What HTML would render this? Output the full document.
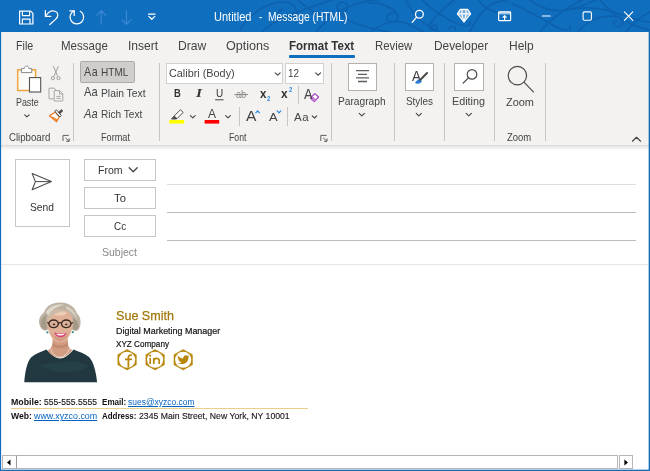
<!DOCTYPE html>
<html lang="en">
<head>
<meta charset="utf-8">
<title>Untitled - Message (HTML)</title>
<style>
html,body{margin:0;padding:0;}
body{width:650px;height:471px;overflow:hidden;background:#fff;font-family:"Liberation Sans",sans-serif;position:relative;}
#win{position:absolute;left:0;top:0;width:650px;height:471px;background:#fff;overflow:hidden;}
.abs{position:absolute;}
.t{position:absolute;white-space:pre;transform-origin:0 50%;font-family:"Liberation Sans",sans-serif;}
#titlebar{position:absolute;left:0;top:0;width:650px;height:32px;background:#106ebe;}
#tabs{position:absolute;left:1px;top:32px;width:648px;height:28px;background:#f3f2f1;}
#ribbon{position:absolute;left:1px;top:60px;width:648px;height:85px;background:#f3f2f1;}
#ribshadow{position:absolute;left:1px;top:145px;width:648px;height:6px;background:linear-gradient(#d8d6d4,#e6e5e4 20%,#eeeeed 40%,#f5f5f5 60%,#fbfbfb 80%,#ffffff);}
#bl{position:absolute;left:0;top:32px;width:1px;height:439px;background:#106ebe;box-shadow:1px 0 0 rgba(16,110,190,0.12);}
#br{position:absolute;left:649px;top:32px;width:1px;height:439px;background:#106ebe;box-shadow:-1px 0 0 rgba(16,110,190,0.35);}
#bb{position:absolute;left:0;top:470px;width:650px;height:1px;background:#106ebe;box-shadow:0 -1px 0 rgba(16,110,190,0.35);}
.sep{position:absolute;width:1px;background:#c8c6c4;}
.box{position:absolute;background:#fff;border:1px solid #c6c6c6;box-sizing:border-box;}
.ibox{position:absolute;background:#fff;border:1px solid #b3b0ad;box-sizing:border-box;}
.combo{position:absolute;background:#fff;border:1px solid #d2d0ce;box-sizing:border-box;}
.line{position:absolute;height:1px;}
svg{position:absolute;left:0;top:0;overflow:visible;}
</style>
</head>
<body>
<div id="win">
  <div id="titlebar"></div>
  <div id="tabs"></div>
  <div id="ribbon"></div>
  <div id="ribshadow"></div>

  <!-- tab underline -->
  <div class="abs" style="left:289px;top:55px;width:66px;height:3px;background:#106ebe;border-radius:1px;"></div>

  <!-- ribbon group separators -->
  <div class="sep" style="left:72.5px;top:63px;height:78px;"></div>
  <div class="sep" style="left:158.5px;top:63px;height:78px;"></div>
  <div class="sep" style="left:330.5px;top:63px;height:78px;"></div>
  <div class="sep" style="left:394.3px;top:63px;height:78px;"></div>
  <div class="sep" style="left:443.8px;top:63px;height:78px;"></div>
  <div class="sep" style="left:493.8px;top:63px;height:78px;"></div>
  <div class="sep" style="left:545.3px;top:63px;height:78px;"></div>
  <!-- small separators in font group -->
  <div class="sep" style="left:297.7px;top:86px;height:18px;"></div>
  <div class="sep" style="left:238.7px;top:107px;height:19px;"></div>
  <div class="sep" style="left:287px;top:107px;height:19px;"></div>

  <!-- HTML selected button -->
  <div class="abs" style="left:80px;top:61px;width:55px;height:22px;background:#d0cecc;border:1px solid #adaba9;border-radius:1.5px;box-sizing:border-box;"></div>

  <!-- combos -->
  <div class="combo" style="left:166px;top:63px;width:117px;height:21px;"></div>
  <div class="combo" style="left:285px;top:63px;width:39px;height:21px;"></div>

  <!-- icon boxes -->
  <div class="ibox" style="left:347.8px;top:63px;width:29.4px;height:27.6px;"></div>
  <div class="ibox" style="left:404.8px;top:63px;width:29px;height:27.6px;"></div>
  <div class="ibox" style="left:454.2px;top:63px;width:29.5px;height:27.6px;"></div>

  <!-- header boxes -->
  <div class="box" style="left:15px;top:158.5px;width:54.5px;height:68.6px;"></div>
  <div class="box" style="left:83.7px;top:158.5px;width:72.4px;height:22px;"></div>
  <div class="box" style="left:83.7px;top:187px;width:72.4px;height:21.6px;"></div>
  <div class="box" style="left:83.7px;top:215px;width:72.4px;height:21.8px;"></div>
  <div class="line" style="left:166.5px;top:184px;width:469px;background:#dedede;"></div>
  <div class="line" style="left:166.5px;top:212px;width:469px;background:#bdbdbd;"></div>
  <div class="line" style="left:166.5px;top:240px;width:469px;background:#bdbdbd;"></div>
  <div class="line" style="left:1px;top:264px;width:647px;background:#e6e6e6;"></div>

  <!-- signature gold line -->
  <div class="line" style="left:10.5px;top:408px;width:297px;background:#e9cf8b;"></div>

  <!-- scrollbar -->
  <div class="abs" style="left:2px;top:455px;width:15px;height:14px;background:#fff;border:1px solid #b6b6b6;box-sizing:border-box;"></div>
  <div class="abs" style="left:16px;top:455px;width:602px;height:14px;background:#fff;border:1px solid #b6b6b6;border-left-color:#9a9a9a;box-sizing:border-box;"></div>
  <div class="abs" style="left:619px;top:455px;width:14px;height:14px;background:#fff;border:1px solid #b6b6b6;box-sizing:border-box;"></div>

  <div id="bl"></div><div id="br"></div><div id="bb"></div>

  <svg width="650" height="471" viewBox="0 0 650 471">
    <!-- title bar pattern -->
<clipPath id="tbclip"><rect x="0" y="0" width="650" height="32"/></clipPath>
<g clip-path="url(#tbclip)" fill="none" stroke="#0c5ca6" stroke-width="1.7" opacity="0.7" stroke-linecap="round">
  <path d="M240 30 C250 14 266 2 284 2 C298 3 300 16 290 20 C280 23 274 14 282 9"/>
  <path d="M262 32 C274 20 292 14 308 8 C320 4 328 1 332 0"/>
  <path d="M298 0 C308 10 322 18 338 15 C350 12 350 2 342 2 C334 3 336 14 350 21 C364 28 378 30 390 32"/>
  <path d="M316 32 C326 20 338 10 356 4 C366 1 372 0 378 0"/>
  <path d="M368 3 C378 2 392 6 397 14 C400 20 394 24 389 21 C384 18 388 12 394 13"/>
  <path d="M372 32 C380 24 390 20 402 22 C412 24 418 30 424 32"/>
  <path d="M422 0 C430 8 444 18 458 24 C466 27 472 26 470 22"/>
  <path d="M428 26 C434 18 444 8 454 0"/>
  <path d="M430 28 C432 24 438 24 437 28 C436 31 430 31 430 28 Z"/>
  <path d="M449 29 C451 25 457 26 455 30"/>
  <path d="M406 0 C410 10 420 24 440 32"/>
  <path d="M470 32 C474 22 482 10 492 4 C498 1 504 0 508 2"/>
  <path d="M478 0 C484 8 494 14 506 12"/>
  <path d="M512 4 C524 8 540 18 558 28 C566 31 572 30 570 26"/>
  <path d="M540 32 C548 22 562 10 582 0"/>
  <path d="M530 0 C540 8 552 12 566 10 C580 8 590 2 596 0"/>
  <path d="M568 10 C584 6 604 8 620 14 C632 18 640 22 650 22"/>
  <path d="M578 32 C586 22 598 16 612 16 C624 17 626 26 618 27 C612 27 612 21 617 21"/>
  <path d="M600 0 C608 10 622 24 650 30"/>
  <path d="M626 32 C632 24 642 16 650 12"/>
</g>

<!-- title: save -->
<g fill="none" stroke="#fff" stroke-width="1.2" stroke-linejoin="round">
  <path d="M19.6 11.1 H30.6 L32.9 13.4 V24 H19.6 Z"/>
  <path d="M22.4 11.1 V15.6 H29.6 V11.1"/>
  <path d="M22.4 24 V19.2 H30 V24"/>
</g>
<!-- undo -->
<g fill="none" stroke="#fff" stroke-width="1.25" stroke-linecap="round" stroke-linejoin="round">
  <path d="M45.4 10.6 V16.4 H50.8"/>
  <path d="M45.6 16.2 C47.5 13 50 10.8 53 10.8 C56 10.8 57.8 13 57.8 15.2 C57.8 17 57 18 55.5 19.4 L49.8 24.5"/>
  <!-- redo -->
  <path d="M69.8 10.9 H74.2 V15.4"/>
  <path d="M80.3 11.3 A6.8 6.8 0 1 1 74.2 10.9"/>
</g>
<!-- up / down (disabled) -->
<g fill="none" stroke="#3b88d3" stroke-width="1.2" stroke-linecap="round" stroke-linejoin="round">
  <path d="M101.2 24.3 V10.8 M96.8 15.2 L101.2 10.8 L105.7 15.2"/>
  <path d="M126.5 10.7 V24.2 M122 19.8 L126.5 24.2 L131 19.8"/>
</g>
<!-- customize QAT -->
<g fill="none" stroke="#fff" stroke-width="1.2" stroke-linecap="round" stroke-linejoin="round">
  <path d="M148.6 14.2 H155"/>
  <path d="M148.8 16.4 L151.8 19.3 L154.8 16.4"/>
</g>
<!-- title search -->
<g fill="none" stroke="#fff" stroke-width="1.3" stroke-linecap="round">
  <circle cx="419.4" cy="14.2" r="3.9"/>
  <path d="M416.6 17.1 L412.2 22.3"/>
</g>
<!-- diamond -->
<g fill="none" stroke="#fff" stroke-width="1.2" stroke-linejoin="round">
  <path d="M460.3 9.4 H467.7 L470.6 13.8 L464 21.8 L457.4 13.8 Z" fill="rgba(255,255,255,0.45)"/>
  <path d="M457.4 13.8 H470.6 M462.2 9.4 L461.6 13.8 L464 21.8 L466.4 13.8 L465.8 9.4"/>
</g>
<!-- ribbon display options -->
<g fill="none" stroke="#fff" stroke-width="1.2" stroke-linejoin="round">
  <rect x="498.6" y="11.8" width="12" height="8.8" rx="0.8"/>
  <rect x="498.6" y="11.8" width="12" height="2.6" fill="rgba(255,255,255,0.6)" stroke="none"/>
  <path d="M504.6 20 V15.8 M502.7 17.6 L504.6 15.7 L506.5 17.6"/>
</g>
<!-- window controls -->
<g fill="none" stroke="#fff" stroke-width="1.1" stroke-linecap="round">
  <path d="M542.3 16 H550.3"/>
  <rect x="583.1" y="11.9" width="8.3" height="8.3" rx="1.2"/>
  <path d="M624.4 11.8 L632.8 20.4 M632.8 11.8 L624.4 20.4"/>
</g>

<!-- ===== Ribbon ===== -->
<!-- paste -->
<rect x="17.7" y="69.8" width="17.9" height="20.7" fill="#fdfbf8" stroke="#f0a540" stroke-width="1.5"/>
<path d="M21.4 72.6 V68.6 H24.3 C24.3 65.2 28.9 65.2 28.9 68.6 H31.8 V72.6 Z" fill="#fff" stroke="#8a8886" stroke-width="1"/>
<rect x="29.5" y="77.6" width="11.2" height="14.4" fill="#fff" stroke="#55534f" stroke-width="1.1"/>
<path d="M24.7 114.8 L26.9 116.9 L29.1 114.8" fill="none" stroke="#444" stroke-width="1.1" stroke-linecap="round" stroke-linejoin="round"/>
<!-- scissors -->
<g fill="none" stroke="#a19f9d" stroke-width="1">
  <path d="M53.4 66.2 L57.8 76.6 M58.4 66.2 L53.8 76.6"/>
  <circle cx="52.9" cy="78.2" r="1.6"/><circle cx="58.5" cy="78.2" r="1.6"/>
</g>
<!-- copy -->
<g fill="none" stroke="#a8a6a4" stroke-width="1" stroke-linejoin="round">
  <path d="M53.8 98.8 H49 V88.2 H54.2 L56.2 90.2"/>
  <path d="M54.2 90.6 H59.6 L62.8 93.8 V101 H54.2 Z"/>
  <path d="M59.4 90.8 V94 H62.6"/>
  <path d="M56.4 96.4 H60.6 M56.4 98.4 H60.6"/>
</g>
<!-- format painter -->
<g stroke-linejoin="round">
  <path d="M49.4 115.8 L55.2 112.2 L59.2 117 L56.6 121.8 Z" fill="#fff" stroke="#e8731a" stroke-width="1.1"/>
  <path d="M49.6 116 L52.6 116.6 L57.8 119.4 L56.6 121.6 Z" fill="#ef8a30" stroke="none"/>
  <path d="M54.8 111.2 L56.6 109.9 L61.2 115.4 L59.8 117 Z" fill="#fff" stroke="#4d4b49" stroke-width="1"/>
  <path d="M58.4 112.2 L61.6 109.6 L62.8 111 L59.8 113.8 Z" fill="#4d4b49" stroke="#4d4b49" stroke-width="0.7"/>
</g>
<!-- launchers -->
<g fill="none" stroke="#605e5c" stroke-width="1">
  <path d="M63 141 V135.4 H68.8"/>
  <path d="M65.4 137.8 L69 141.2 M69.2 138.4 V141.3 H66.2"/>
  <path d="M320.8 141 V135.4 H326.6"/>
  <path d="M323.2 137.8 L326.8 141.2 M327 138.4 V141.3 H324"/>
</g>
<!-- combo chevrons -->
<g fill="none" stroke="#444" stroke-width="1.1" stroke-linecap="round" stroke-linejoin="round">
  <path d="M275.2 72.8 L277.7 75.2 L280.2 72.8"/>
  <path d="M315.6 72.8 L318.1 75.2 L320.6 72.8"/>
  <path d="M190.4 115.6 L192.8 117.8 L195.2 115.6"/>
  <path d="M225.6 115.6 L228 117.8 L230.4 115.6"/>
  <path d="M312.2 115.8 L314.5 118 L316.8 115.8"/>
  <path d="M359.2 113.4 L361.8 115.8 L364.4 113.4"/>
  <path d="M416.2 113.4 L418.8 115.8 L421.4 113.4"/>
  <path d="M466.2 113.4 L468.8 115.8 L471.4 113.4"/>
  <path d="M129.2 167.8 L133.2 171.8 L137.2 167.8" stroke-width="1.3"/>
  <path d="M632.4 141.2 L636.5 137.3 L640.6 141.2" stroke-width="1.2"/>
</g>
<!-- U underline, ab strike -->
<path d="M215.2 99.8 H223.5" stroke="#444" stroke-width="1"/>
<path d="M234.4 94.6 H248" stroke="#8a8886" stroke-width="1"/>
<!-- highlighter -->
<rect x="169.3" y="120" width="14.8" height="3.6" fill="#ffff00"/>
<g fill="none" stroke="#4d4b49" stroke-width="1" stroke-linejoin="round">
  <path d="M174.2 116 L180.4 109.8 L183.2 112.4 L177 118.6 Z" fill="#fff"/>
  <path d="M174.2 116 L171.6 119 L175.4 119 L177 118.6" fill="#4d4b49"/>
</g>
<!-- font colour bar -->
<rect x="204.6" y="120" width="14.6" height="3.6" fill="#ff0000"/>
<!-- grow/shrink carets -->
<g fill="none" stroke="#2b88d8" stroke-width="1.2" stroke-linecap="round" stroke-linejoin="round">
  <path d="M255.8 112.8 L257.6 110.8 L259.4 112.8"/>
  <path d="M277.2 110.8 L279 112.8 L280.8 110.8"/>
</g>
<!-- clear formatting eraser -->
<path d="M310.4 98 L314.8 93.6 L318.6 97 L314.2 101.6 Z" fill="#fff" stroke="#a33bc2" stroke-width="1.1" stroke-linejoin="round"/>
<path d="M310.4 98 L312.3 96.1 L316.1 99.6 L314.2 101.6 Z" fill="#c67bd9" stroke="none"/>
<!-- paragraph icon -->
<g stroke="#605e5c" stroke-width="1.3">
  <path d="M356 70.6 H369 M358 74.4 H367 M356 77.9 H369 M358 81.5 H367"/>
</g>
<!-- styles icon: brush -->
<path d="M427 73 L420.2 80" stroke="#4d4b49" stroke-width="2" stroke-linecap="round"/>
<path d="M415.6 83 C416.8 79.8 419.4 79 420.8 80.2 C422 81.8 420.6 83.8 415.6 83 Z" fill="#2b7cd3" stroke="#2b7cd3" stroke-width="0.9"/>
<!-- editing icon -->
<g fill="none" stroke="#4d4b49" stroke-width="1.2" stroke-linecap="round">
  <circle cx="472" cy="74.4" r="4.8"/>
  <path d="M468.5 77.9 L463.2 83"/>
</g>
<!-- zoom icon -->
<g fill="none" stroke="#4d4b49" stroke-width="1.2" stroke-linecap="round">
  <circle cx="517.4" cy="75.6" r="9.2"/>
  <path d="M524.2 82.4 L533.4 91.8"/>
</g>
<!-- send icon -->
<path d="M32.2 173.6 L51.4 181.6 L32.2 189.8 L35.4 181.6 Z" fill="none" stroke="#4d4b49" stroke-width="1.1" stroke-linejoin="round"/>
<path d="M35.4 181.6 H50.4" fill="none" stroke="#4d4b49" stroke-width="1"/>
<!-- scrollbar arrows -->
<path d="M10.5 459.6 V465.4 L7 462.5 Z" fill="#000"/>
<path d="M624.4 459.6 V465.4 L628 462.5 Z" fill="#000"/>
<!-- ===== signature photo ===== -->
<defs>
  <filter id="pb" x="-10%" y="-10%" width="120%" height="120%"><feGaussianBlur stdDeviation="0.65"/></filter>
  <filter id="pb2" x="-20%" y="-20%" width="140%" height="140%"><feGaussianBlur stdDeviation="0.9"/></filter>
  <clipPath id="pclip"><rect x="20" y="298" width="82" height="84.2"/></clipPath>
</defs>
<g clip-path="url(#pclip)">
<g filter="url(#pb)">
  <!-- body -->
  <path d="M24.2 383 C25 372 27 362 31 357.5 C35 354 41 352 46.5 349.6 C52 356 56 358.4 60 358.4 C64 358.4 68.5 355.5 73.6 349.4 C79 351.6 85 353.6 89 357 C93.4 361.5 96 371 97.2 383 Z" fill="#21393f"/>
  <path d="M40 366 C48 362 58 364 64 362 C72 360 80 362 88 366 C84 372 60 376 40 366Z" fill="#2a464c" opacity="0.6"/>
  <!-- neck -->
  <path d="M52.6 336 C52.8 344 52 349 47.4 350.4 C51.5 356 56 357.6 60 357.6 C64 357.6 68.5 355 72.6 350.2 C68.2 349 67.6 344 67.8 336 Z" fill="#d29c82"/>
  <path d="M53 343 C56 346.5 64 346.5 67.6 342.4 L67.6 346 C63 349 57 349 53 346.4Z" fill="#b98268" opacity="0.7"/>
  <!-- necklace -->
  <path d="M50.6 349 C53 355.4 57 357.2 60 357.2 C63 357.2 67 355 69.6 348.8" fill="none" stroke="#e9e2d8" stroke-width="0.8"/>
  <!-- hair back -->
  <path d="M39.6 325 C37.8 319.6 40.6 315 44 312.6 C46 306 52.6 302.4 60.4 302.6 C68.8 302.8 74.8 307 76.8 313.2 C81 316.6 81.6 323.4 79.2 328.4 C77.6 331.4 74 331.6 72.4 329.8 L47.4 329.8 C45 331.8 41 330.2 39.6 325 Z" fill="#bdb2a2"/>
  <path d="M45.6 312.4 C49.6 305.4 58 303.6 64.4 305 C58 306.4 52 309 48.6 315.4 Z" fill="#ddd6ca"/>
  <path d="M66.6 306 C72.6 308.2 76.4 313.4 76.8 319 C73.8 314.6 70.6 311 66 308.8 Z" fill="#d6cdbf"/>
  <path d="M40.6 323.5 C41.2 319.6 43.8 316 46.6 314.6 C45.4 318.6 45.8 324 47.4 329 C44.6 330.4 41 328 40.6 323.5Z" fill="#a69a88"/>
  <path d="M73 318 C76.6 319.6 79.2 323.6 78.2 328 C76.6 330.5 73.6 330 72.6 328.6 C73.6 325 73.6 321.4 73 318Z" fill="#a39786"/>
  <!-- face -->
  <path d="M47.4 322 C47 314.4 52.2 309.4 59.6 309.2 C67.6 309.2 72.8 314.4 72.6 322 C72.6 330 70.2 336.2 66.2 340.2 C63.4 343.2 57 343.4 54.2 340.4 C49.8 336.2 47.6 330 47.4 322 Z" fill="#e0b197"/>
  <path d="M52.6 313.6 C56 310.6 62.6 310.2 66.6 313 C66 316.4 54 316.8 52.6 313.6Z" fill="#eccab4"/>
  <path d="M50 313.8 C53.6 309.4 62 308.4 68 311.2 C63 311.2 57 311.6 52.4 315.6 C50.4 317.6 48.8 320.2 48.2 322 C48 318.6 48.6 315.6 50 313.8Z" fill="#c9bcab"/>
  <path d="M50.6 331 C52.6 337 55.6 341 60 341.6 C64.6 341.2 67.8 337 69.6 331 C68 334 65 337.2 60 337.4 C55 337.2 52.4 334 50.6 331Z" fill="#cd977d" opacity="0.75"/>
  <!-- earrings -->
  <circle cx="47.4" cy="332.4" r="1.1" fill="#3f8a8a"/>
  <circle cx="72.8" cy="332.2" r="1.1" fill="#3f8a8a"/>
  <!-- glasses -->
  <g fill="rgba(215,180,160,0.35)" stroke="#3b2a22" stroke-width="1.4">
    <ellipse cx="53.6" cy="323.8" rx="4.7" ry="3.8"/>
    <ellipse cx="66.2" cy="323.8" rx="4.7" ry="3.8"/>
  </g>
  <path d="M58.2 323.2 C59.4 322.4 60.8 322.4 62 323.2 M49.2 323.4 L47.2 322.6 M71 323.4 L73 322.6" fill="none" stroke="#3b2a22" stroke-width="1.1"/>
  <ellipse cx="54" cy="324.4" rx="1.3" ry="0.9" fill="#4a3a32"/>
  <ellipse cx="66.2" cy="324.4" rx="1.3" ry="0.9" fill="#4a3a32"/>
  <!-- mouth -->
  <path d="M54.2 332.6 C57 333.6 63.6 333.6 66.6 332.4 C65.4 336.4 62.6 337.2 60.4 337.2 C58 337.2 55.4 336.2 54.2 332.6 Z" fill="#d43d72"/>
  <path d="M55.8 333.4 C58 334 63 334 65 333.2 C64 335.2 62 335.6 60.4 335.6 C58.6 335.6 56.8 335.2 55.8 333.4Z" fill="#f8eeee"/>
</g>
</g>

<!-- ===== social hexagons ===== -->
<g fill="#b8860b" stroke="#b8860b" stroke-width="0.6" stroke-linejoin="round">
  <path d="M127.1 349.6 L136.3 354.7 V364.8 L127.1 369.9 L117.9 364.8 V354.7 Z"/>
  <path d="M155.1 349.6 L164.3 354.7 V364.8 L155.1 369.9 L145.9 364.8 V354.7 Z"/>
  <path d="M183.2 349.6 L192.4 354.7 V364.8 L183.2 369.9 L174 364.8 V354.7 Z"/>
</g>
<circle cx="127.1" cy="359.75" r="8.1" fill="#fff"/>
<circle cx="155.1" cy="359.75" r="8.1" fill="#fff"/>
<circle cx="183.2" cy="359.75" r="8.1" fill="#fff"/>
<!-- facebook f -->
<path d="M132 355.4 C129.6 354.6 128.4 355.8 128.4 357.8 V367.6 M125 359.3 H132" fill="none" stroke="#b8860b" stroke-width="1.8"/>
<!-- linkedin in -->
<g fill="none" stroke="#b8860b" stroke-width="1.7">
  <path d="M150.2 358 V364"/>
  <path d="M153.8 364 V358 M153.8 360.6 C154 357.8 159.2 357.4 159.2 360.8 V364"/>
</g>
<circle cx="150.2" cy="355.7" r="1.1" fill="#b8860b"/>
<!-- twitter bird -->
<path d="M177.8 355.6 C179.6 357.8 181.4 358.6 183.2 358.6 C182.8 355.6 186.2 354.2 187.8 356 L189.2 355.4 L188.4 357.2 C188.8 362 184.6 365.4 177.8 363.4 C179.6 363.4 180.6 363 181.4 362.2 C179.8 361.8 179 360.8 178.6 359.8 C178 358.2 177.6 357 177.8 355.6 Z" fill="#b8860b"/>

  </svg>

<span class="t" style="left:214.3px;top:11.37px;font-size:12.2px;line-height:12.2px;color:#fff;transform:scaleX(0.9050);">Untitled</span>
<span class="t" style="left:258.8px;top:11.37px;font-size:12.2px;line-height:12.2px;color:#fff;transform:scaleX(0.7877);">-</span>
<span class="t" style="left:268.4px;top:11.37px;font-size:12.2px;line-height:12.2px;color:#fff;transform:scaleX(0.8424);">Message (HTML)</span>
<span class="t" style="left:16.3px;top:39.50px;font-size:12.4px;line-height:12.4px;color:#444;transform:scaleX(0.8613);">File</span>
<span class="t" style="left:60.6px;top:39.50px;font-size:12.4px;line-height:12.4px;color:#444;transform:scaleX(0.9308);">Message</span>
<span class="t" style="left:128.0px;top:39.50px;font-size:12.4px;line-height:12.4px;color:#444;transform:scaleX(0.9742);">Insert</span>
<span class="t" style="left:178.0px;top:39.50px;font-size:12.4px;line-height:12.4px;color:#444;transform:scaleX(0.9785);">Draw</span>
<span class="t" style="left:226.3px;top:39.50px;font-size:12.4px;line-height:12.4px;color:#444;transform:scaleX(1.0163);">Options</span>
<span class="t" style="left:289.4px;top:39.50px;font-size:12.4px;line-height:12.4px;color:#333;font-weight:bold;transform:scaleX(0.9314);">Format Text</span>
<span class="t" style="left:375.2px;top:39.50px;font-size:12.4px;line-height:12.4px;color:#444;transform:scaleX(0.9178);">Review</span>
<span class="t" style="left:433.7px;top:39.50px;font-size:12.4px;line-height:12.4px;color:#444;transform:scaleX(0.9578);">Developer</span>
<span class="t" style="left:509.0px;top:39.50px;font-size:12.4px;line-height:12.4px;color:#444;transform:scaleX(0.9692);">Help</span>
<span class="t" style="left:15.6px;top:96.59px;font-size:11px;line-height:11px;color:#444;transform:scaleX(0.8067);">Paste</span>
<span class="t" style="left:8.6px;top:132.73px;font-size:10px;line-height:10px;color:#444;transform:scaleX(0.9647);">Clipboard</span>
<span class="t" style="left:100.5px;top:66.69px;font-size:11px;line-height:11px;color:#444;transform:scaleX(0.9148);">HTML</span>
<span class="t" style="left:101.0px;top:87.69px;font-size:11px;line-height:11px;color:#444;transform:scaleX(0.9368);">Plain Text</span>
<span class="t" style="left:101.0px;top:108.69px;font-size:11px;line-height:11px;color:#444;transform:scaleX(0.9168);">Rich Text</span>
<span class="t" style="left:101.3px;top:132.73px;font-size:10px;line-height:10px;color:#444;transform:scaleX(0.9156);">Format</span>
<span class="t" style="left:168.6px;top:68.03px;font-size:11.3px;line-height:11.3px;color:#444;transform:scaleX(0.9600);">Calibri (Body)</span>
<span class="t" style="left:287.5px;top:68.03px;font-size:11.3px;line-height:11.3px;color:#444;transform:scaleX(0.8745);">12</span>
<span class="t" style="left:229.0px;top:132.73px;font-size:10px;line-height:10px;color:#444;transform:scaleX(0.8693);">Font</span>
<span class="t" style="left:338.4px;top:95.69px;font-size:11px;line-height:11px;color:#444;transform:scaleX(0.9265);">Paragraph</span>
<span class="t" style="left:406.0px;top:95.69px;font-size:11px;line-height:11px;color:#444;transform:scaleX(0.9009);">Styles</span>
<span class="t" style="left:452.4px;top:95.69px;font-size:11px;line-height:11px;color:#444;transform:scaleX(0.9810);">Editing</span>
<span class="t" style="left:506.0px;top:96.69px;font-size:11px;line-height:11px;color:#444;transform:scaleX(0.9956);">Zoom</span>
<span class="t" style="left:507.4px;top:132.73px;font-size:10px;line-height:10px;color:#444;transform:scaleX(0.9467);">Zoom</span>
<span class="t" style="left:83.6px;top:65.73px;font-size:12.6px;line-height:12.6px;color:#444;letter-spacing:0.8px;transform:scaleX(0.8463);">Aa</span>
<span class="t" style="left:83.6px;top:86.33px;font-size:12.6px;line-height:12.6px;color:#444;transform:scaleX(0.8828);">Aa</span>
<span class="t" style="left:83.6px;top:107.53px;font-size:12.6px;line-height:12.6px;color:#444;font-style:italic;transform:scaleX(0.8828);">Aa</span>
<span class="t" style="left:173.6px;top:88.12px;font-size:11.2px;line-height:11.2px;color:#333;font-weight:bold;transform:scaleX(0.8402);">B</span>
<span class="t" style="left:195.5px;top:87.44px;font-size:12px;line-height:12px;color:#333;font-style:italic;font-weight:bold;font-family:'Liberation Serif',serif;transform:scaleX(1.2843);">I</span>
<span class="t" style="left:215.8px;top:88.12px;font-size:11.2px;line-height:11.2px;color:#333;transform:scaleX(0.8896);">U</span>
<span class="t" style="left:236.2px;top:88.71px;font-size:10.5px;line-height:10.5px;color:#8a8886;transform:scaleX(0.8727);">ab</span>
<span class="t" style="left:260.0px;top:87.59px;font-size:12.3px;line-height:12.3px;color:#333;font-weight:bold;transform:scaleX(0.9352);">x</span>
<span class="t" style="left:266.8px;top:96.38px;font-size:6.4px;line-height:6.4px;color:#2b88d8;font-weight:bold;transform:scaleX(0.8982);">2</span>
<span class="t" style="left:281.4px;top:87.59px;font-size:12.3px;line-height:12.3px;color:#333;font-weight:bold;transform:scaleX(0.9644);">x</span>
<span class="t" style="left:288.6px;top:86.78px;font-size:6.4px;line-height:6.4px;color:#2b88d8;font-weight:bold;transform:scaleX(0.8982);">2</span>
<span class="t" style="left:304.4px;top:86.30px;font-size:15px;line-height:15px;color:#444;transform:scaleX(0.8587);">A</span>
<span class="t" style="left:208.0px;top:107.96px;font-size:12.8px;line-height:12.8px;color:#444;transform:scaleX(0.9360);">A</span>
<span class="t" style="left:246.0px;top:107.70px;font-size:15px;line-height:15px;color:#444;transform:scaleX(1.0384);">A</span>
<span class="t" style="left:269.0px;top:110.50px;font-size:11.7px;line-height:11.7px;color:#444;transform:scaleX(1.1030);">A</span>
<span class="t" style="left:293.6px;top:111.63px;font-size:10.6px;line-height:10.6px;color:#444;letter-spacing:0.6px;transform:scaleX(1.0867);">Aa</span>
<span class="t" style="left:412.0px;top:69.35px;font-size:14px;line-height:14px;color:#444;transform:scaleX(0.9632);">A</span>
<span class="t" style="left:30.4px;top:201.71px;font-size:11.8px;line-height:11.8px;color:#333;transform:scaleX(0.8707);">Send</span>
<span class="t" style="left:98.2px;top:164.61px;font-size:11.8px;line-height:11.8px;color:#333;transform:scaleX(0.8935);">From</span>
<span class="t" style="left:113.7px;top:193.21px;font-size:11.8px;line-height:11.8px;color:#333;transform:scaleX(0.9544);">To</span>
<span class="t" style="left:114.0px;top:220.81px;font-size:11.8px;line-height:11.8px;color:#333;transform:scaleX(0.8390);">Cc</span>
<span class="t" style="left:102.1px;top:247.31px;font-size:11.8px;line-height:11.8px;color:#8a8886;transform:scaleX(0.8892);">Subject</span>
<span class="t" style="left:116.4px;top:308.83px;font-size:13.2px;line-height:13.2px;color:#a2780a;-webkit-text-stroke:0.25px #a2780a;transform:scaleX(0.9533);">Sue Smith</span>
<span class="t" style="left:116.4px;top:326.97px;font-size:8.3px;line-height:8.3px;color:#161616;-webkit-text-stroke:0.2px #161616;transform:scaleX(1.0760);">Digital Marketing Manager</span>
<span class="t" style="left:116.4px;top:339.57px;font-size:8.3px;line-height:8.3px;color:#161616;-webkit-text-stroke:0.2px #161616;transform:scaleX(0.9823);">XYZ Company</span>
<span class="t" style="left:10.6px;top:397.77px;font-size:8.3px;line-height:8.3px;color:#111;font-weight:bold;transform:scaleX(1.0604);">Mobile:</span>
<span class="t" style="left:43.8px;top:397.77px;font-size:8.3px;line-height:8.3px;color:#161616;-webkit-text-stroke:0.12px #161616;transform:scaleX(1.0348);">555-555.5555</span>
<span class="t" style="left:101.7px;top:397.77px;font-size:8.3px;line-height:8.3px;color:#111;font-weight:bold;transform:scaleX(0.9757);">Email:</span>
<span class="t" style="left:128.0px;top:397.77px;font-size:8.3px;line-height:8.3px;color:#0563c1;text-decoration:underline;transform:scaleX(1.0209);">sues@xyzco.com</span>
<span class="t" style="left:10.6px;top:411.97px;font-size:8.3px;line-height:8.3px;color:#111;font-weight:bold;transform:scaleX(1.0377);">Web:</span>
<span class="t" style="left:34.0px;top:411.97px;font-size:8.3px;line-height:8.3px;color:#0563c1;text-decoration:underline;transform:scaleX(1.0709);">www.xyzco.com</span>
<span class="t" style="left:101.7px;top:411.97px;font-size:8.3px;line-height:8.3px;color:#111;font-weight:bold;transform:scaleX(0.9564);">Address:</span>
<span class="t" style="left:138.6px;top:411.97px;font-size:8.3px;line-height:8.3px;color:#161616;-webkit-text-stroke:0.12px #161616;transform:scaleX(1.0449);">2345 Main Street, New York, NY 10001</span>
</div>
</body>
</html>
